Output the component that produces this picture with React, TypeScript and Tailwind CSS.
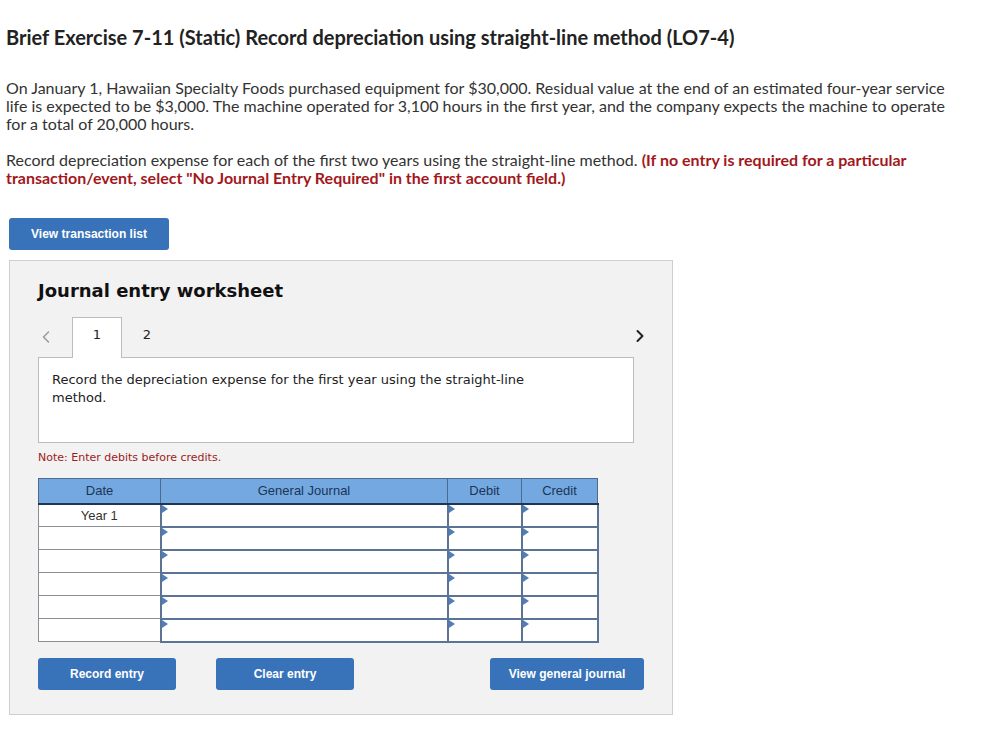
import { ChevronLeft, ChevronRight } from "lucide-react"

const rows = [
  { date: "Year 1" },
  { date: "" },
  { date: "" },
  { date: "" },
  { date: "" },
  { date: "" },
]

function InputCell({ width }: { width: string }) {
  return (
    <td className={`${width} relative h-[23px] border-2 border-[#5b7495] bg-white p-0`}>
      <span className="absolute left-0 top-0 h-0 w-0 border-y-[4px] border-l-[6px] border-y-transparent border-l-[#4f7fb8]" />
    </td>
  )
}

function BlueButton({ label, className }: { label: string; className?: string }) {
  return (
    <button
      className={`h-[32px] rounded-[3px] bg-[#3873ba] text-[12px] font-bold text-white ${className ?? ""}`}
      style={{ fontFamily: "'Liberation Sans', Arial, sans-serif" }}
    >
      {label}
    </button>
  )
}

export default function App() {
  return (
    <div className="min-h-[742px] w-[989px] bg-white text-[#333]" style={{ fontFamily: "Lato, 'Open Sans', sans-serif" }}>
      <div className="px-[6px] pt-[25px]">
        <h1 className="text-[20px] font-bold leading-[24px] text-[#222]">
          Brief Exercise 7-11 (Static) Record depreciation using straight-line method (LO7-4)
        </h1>

        <p className="mt-[30px] w-[950px] text-[16px] leading-[18px] text-[#333]">
          On January 1, Hawaiian Specialty Foods purchased equipment for $30,000. Residual value at the end of an estimated four-year service life is expected to be $3,000. The machine operated for 3,100 hours in the first year, and the company expects the machine to operate for a total of 20,000 hours.
        </p>

        <p className="mt-[18px] w-[950px] text-[16px] leading-[18px] text-[#333]">
          Record depreciation expense for each of the first two years using the straight-line method.{" "}
          <span className="font-bold text-[#a3171c]">
            (If no entry is required for a particular transaction/event, select "No Journal Entry Required" in the first account field.)
          </span>
        </p>
      </div>

      <div className="px-[9px]">
        <BlueButton label="View transaction list" className="mt-[31px] w-[160px]" />

        {/* Worksheet */}
        <div
          className="mt-[10px] h-[455px] w-[664px] border border-[#cfcfcf] bg-[#f2f2f2] px-[28px]"
          style={{ fontFamily: "'DejaVu Sans', Verdana, sans-serif" }}
        >
          <h2 className="mt-[19px] text-[18px] font-bold leading-[22px] text-[#111]">Journal entry worksheet</h2>

          {/* Tabs */}
          <div className="mt-[15px] flex h-[41px] items-end">
            <ChevronLeft className="mb-[11px] ml-[-2px] h-[20px] w-[20px] text-[#9a9a9a]" strokeWidth={1.8} />
            <div className="relative z-10 ml-[16px] flex h-[41px] w-[50px] items-center justify-center border border-b-0 border-[#bdbdbd] bg-white text-[13px] text-[#222] pb-[6px]">
              1
            </div>
            <div className="flex h-[41px] w-[50px] items-center justify-center text-[13px] text-[#222] pb-[6px]">2</div>
            <ChevronRight className="mb-[12px] ml-auto mr-[-6px] h-[20px] w-[20px] text-[#222]" strokeWidth={2.4} />
          </div>

          <div className="mt-[-1px] h-[86px] w-[596px] border border-[#bdbdbd] bg-white px-[13px] pt-[13px] text-[13px] leading-[18px] text-[#222]">
            <p className="w-[490px]">Record the depreciation expense for the first year using the straight-line method.</p>
          </div>

          <p className="mt-[8px] text-[11px] leading-[14px] text-[#9e1b20]">Note: Enter debits before credits.</p>

          {/* Journal table */}
          <table
            className="mt-[13px] border-collapse text-[13px]"
            style={{ fontFamily: "'Liberation Sans', Arial, sans-serif" }}
          >
            <thead>
              <tr className="h-[25px] bg-[#73a8e1] text-[#1c3556]">
                <th className="w-[122px] border border-[#4d6a8e] border-b-2 border-b-[#1f3552] font-normal">Date</th>
                <th className="w-[287px] border border-[#4d6a8e] border-b-2 border-b-[#1f3552] font-normal">General Journal</th>
                <th className="w-[74px] border border-[#4d6a8e] border-b-2 border-b-[#1f3552] font-normal">Debit</th>
                <th className="w-[76px] border border-[#4d6a8e] border-b-2 border-b-[#1f3552] font-normal">Credit</th>
              </tr>
            </thead>
            <tbody>
              {rows.map((r, i) => (
                <tr key={i}>
                  <td className="h-[23px] w-[122px] border border-[#8a8f96] bg-white text-center text-[#333]">{r.date}</td>
                  <InputCell width="w-[287px]" />
                  <InputCell width="w-[74px]" />
                  <InputCell width="w-[76px]" />
                </tr>
              ))}
            </tbody>
          </table>

          <div className="mt-[15px] flex">
            <BlueButton label="Record entry" className="w-[138px]" />
            <BlueButton label="Clear entry" className="ml-[40px] w-[138px]" />
            <BlueButton label="View general journal" className="ml-[136px] w-[154px]" />
          </div>
        </div>
      </div>
    </div>
  )
}
